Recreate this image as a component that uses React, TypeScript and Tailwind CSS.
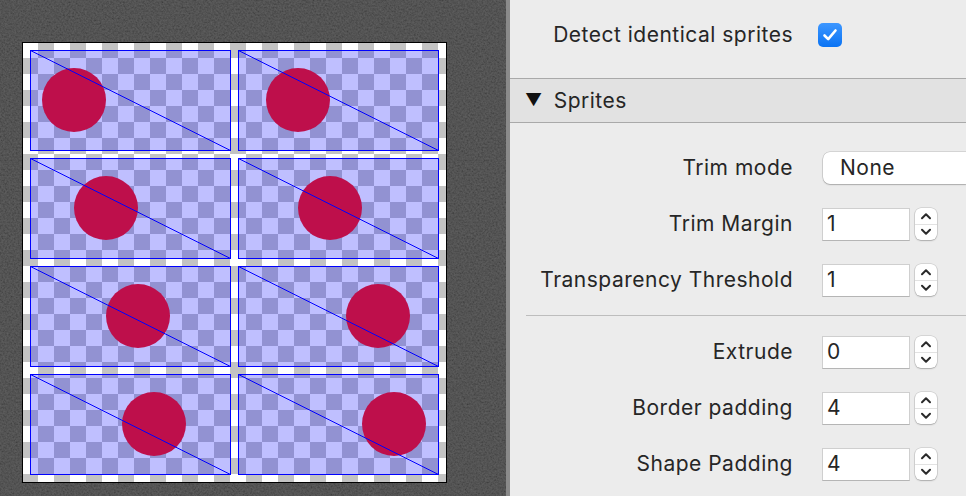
import React from "react";

const offsets = [44, 60, 76, 92, 108, 140, 124, 156];

function Sprite({ cx }: { cx: number }) {
  return (
    <div className="relative w-[201px] h-[101px] border border-[#0000ff] bg-[rgba(0,0,255,0.25)]">
      <svg className="absolute left-[-1px] top-[-1px]" width="201" height="101" viewBox="0 0 201 101">
        <circle cx={cx} cy={50} r={32} fill="#be0f4b" />
        <line x1="0.5" y1="0.5" x2="200.5" y2="100.5" stroke="#0000ff" strokeWidth="1" />
      </svg>
    </div>
  );
}

function Stepper() {
  return (
    <div className="ml-[5px] w-[22px] h-[32px] rounded-[6px] bg-white shadow-[0_0_0_0.5px_rgba(0,0,0,0.18),0_1px_1.5px_rgba(0,0,0,0.2)] flex flex-col">
      <div className="flex-1 flex items-center justify-center border-b border-[#e2e2e2]">
        <svg width="12" height="8" viewBox="0 0 12 8">
          <path d="M2 6.2 L6 2.2 L10 6.2" fill="none" stroke="#2a2a2a" strokeWidth="2" strokeLinecap="round" strokeLinejoin="round" />
        </svg>
      </div>
      <div className="flex-1 flex items-center justify-center">
        <svg width="12" height="8" viewBox="0 0 12 8">
          <path d="M2 1.8 L6 5.8 L10 1.8" fill="none" stroke="#2a2a2a" strokeWidth="2" strokeLinecap="round" strokeLinejoin="round" />
        </svg>
      </div>
    </div>
  );
}

function NumRow({ label, value }: { label: string; value: string }) {
  return (
    <div className="h-[56px] flex items-center">
      <div className="w-[283px] text-right whitespace-nowrap">{label}</div>
      <div className="ml-[29px] flex items-center">
        <div className="w-[88px] h-[33px] bg-white border border-[#cfcfcf] border-b-[#b5b5b5] flex items-center pl-[4px]">
          {value}
        </div>
        <Stepper />
      </div>
    </div>
  );
}

export default function App() {
  return (
    <div
      className="flex w-[966px] h-[496px] overflow-hidden text-[#262626] text-[21px] tracking-[0.5px]"
      style={{ fontFamily: "Inter, 'Noto Sans', sans-serif" }}
    >
      {/* Left canvas area */}
      <div className="relative w-[506px] h-full bg-[#464646] pl-[22px] pt-[42px]">
        <svg className="absolute inset-0" width="506" height="496">
          <filter id="noise" x="0" y="0" width="100%" height="100%">
            <feTurbulence type="fractalNoise" baseFrequency="0.55" numOctaves="3" seed="7" />
            <feColorMatrix type="matrix" values="1 0 0 0 0  1 0 0 0 0  1 0 0 0 0  0 0 0 0 0.22" />
          </filter>
          <rect width="506" height="496" fill="#363636" />
          <rect width="506" height="496" filter="url(#noise)" />
        </svg>
        <div className="relative w-[425px] h-[441px] border border-black bg-origin-border bg-[conic-gradient(#c3c3c3_25%,#ffffff_0_50%,#c3c3c3_0_75%,#ffffff_0)] bg-[length:32px_32px] p-[7px] grid grid-cols-[201px_201px] gap-[7px] content-start">
          {offsets.map((o, i) => (
            <Sprite key={i} cx={o} />
          ))}
        </div>
      </div>
      <div className="w-[4px] h-full bg-[#8a8a8a]" />
      {/* Right settings panel */}
      <div className="flex-1 h-full bg-[#ececec] flex flex-col">
        <div className="h-[78px] pb-[9px] flex items-center">
          <div className="w-[283px] text-right whitespace-nowrap leading-none">Detect identical sprites</div>
          <div className="ml-[25px] w-[24px] h-[24px] rounded-[5px] bg-[linear-gradient(#3d97ff,#0a73f3)] flex items-center justify-center">
            <svg width="16" height="14" viewBox="0 0 16 14">
              <path d="M2.5 7.5 L6.2 11.2 L13.5 2.5" fill="none" stroke="white" strokeWidth="2.6" strokeLinecap="round" strokeLinejoin="round" />
            </svg>
          </div>
        </div>
        <div className="h-[45px] border-y border-[#a9a9a9] bg-[#e2e2e2] flex items-center pl-[15px]">
          <span className="text-[17px] leading-none text-[#111]">▼</span>
          <span className="ml-[11px]">Sprites</span>
        </div>
        <div className="pt-[17px]">
          <div className="h-[56px] flex items-center">
            <div className="w-[283px] text-right whitespace-nowrap">Trim mode</div>
            <div className="ml-[30px] flex-1 h-[32px] bg-white rounded-l-[7px] shadow-[0_0_0_0.5px_rgba(0,0,0,0.2),0_1px_1.5px_rgba(0,0,0,0.2)] flex items-center pl-[17px]">
              None
            </div>
          </div>
          <NumRow label="Trim Margin" value="1" />
          <NumRow label="Transparency Threshold" value="1" />
          <div className="ml-[16px] mt-[7px] mb-[8px] h-[1px] bg-[#bdbdbd]" />
          <NumRow label="Extrude" value="0" />
          <NumRow label="Border padding" value="4" />
          <NumRow label="Shape Padding" value="4" />
        </div>
      </div>
    </div>
  );
}
